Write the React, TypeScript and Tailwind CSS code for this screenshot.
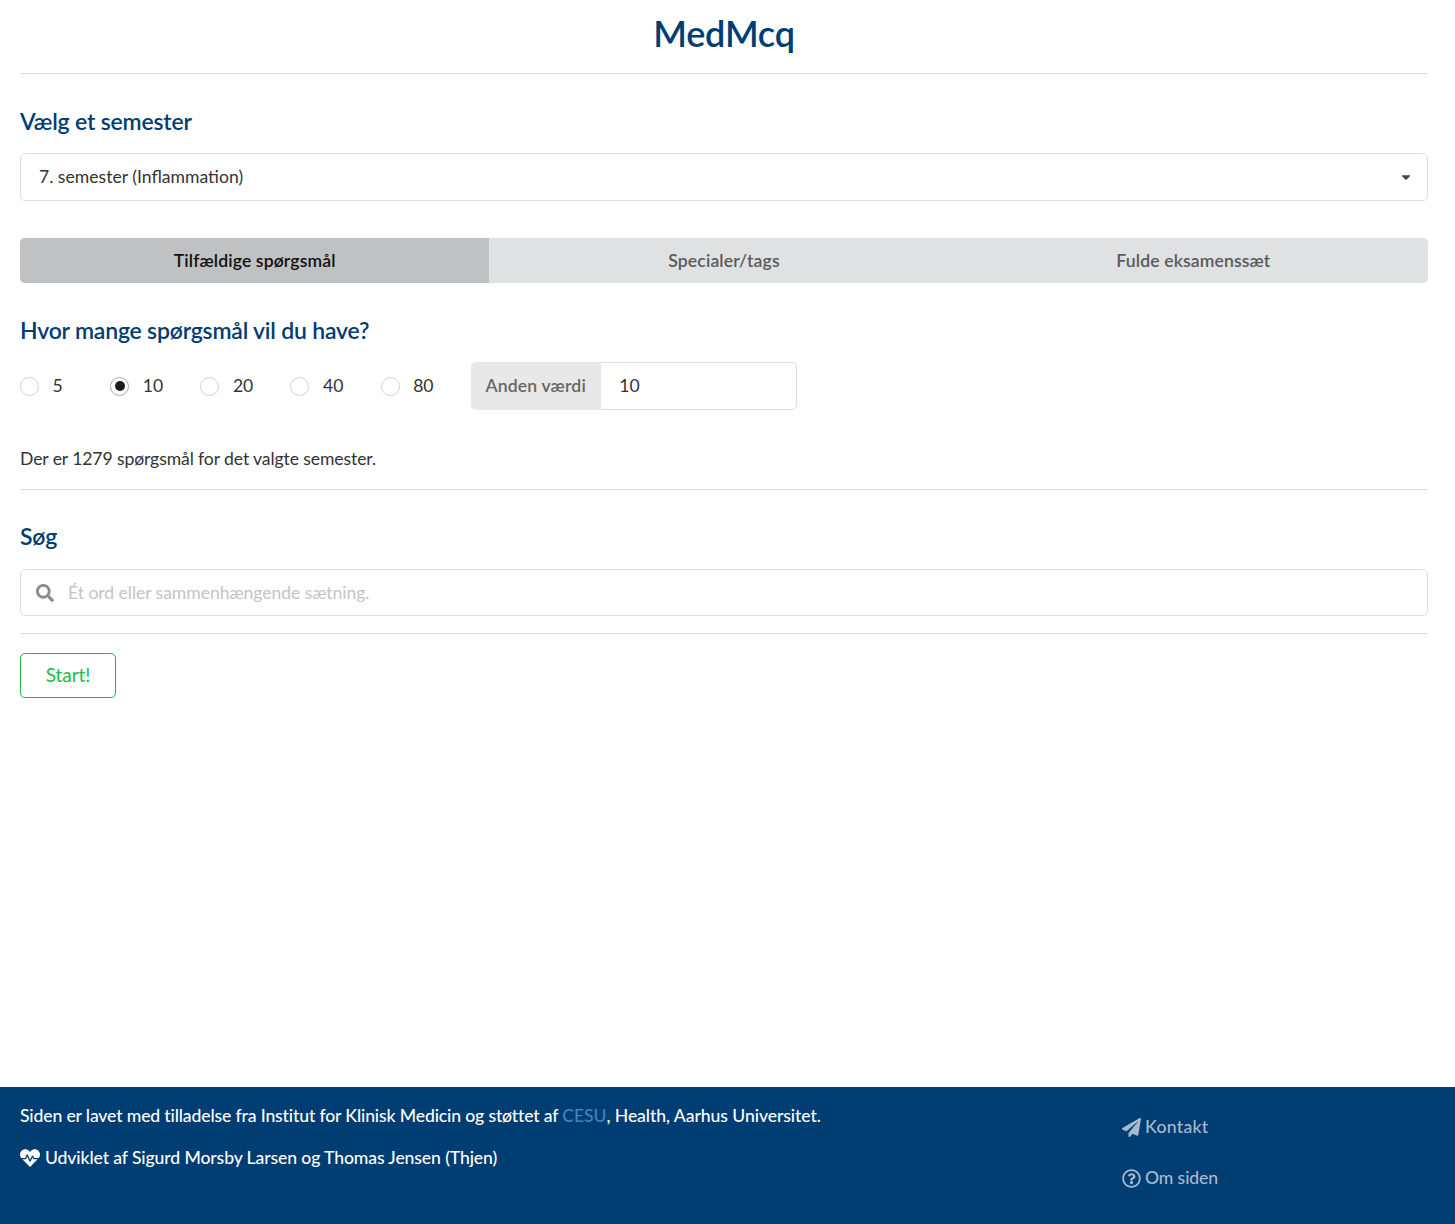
import React from "react";
import { FaCaretDown, FaHeartbeat, FaPaperPlane, FaRegQuestionCircle, FaSearch } from "react-icons/fa";

const counts = ["5", "10", "20", "40", "80"];

const Radio = ({ label, checked }: { label: string; checked?: boolean }) => (
  <label className="flex w-[90.15px] items-center">
    <span className={`flex h-[19px] w-[19px] items-center justify-center rounded-full border bg-white ${checked ? "border-[#aaaaaa]" : "border-[#d4d4d5]"}`}>
      {checked && <span className="h-[10px] w-[10px] rounded-full bg-[#1b1c1d]" />}
    </span>
    <span className="ml-[13.6px] tracking-normal text-[#333333]">{label}</span>
  </label>
);

const App = () => {
  return (
    <div className="flex min-h-[1224px] flex-col bg-white font-['Lato',sans-serif] text-[17.6px] leading-[24px] tracking-[-0.11px] text-[#212121]">
      <div className="ml-5 mr-[27px]">
        <div className="flex h-[74px] items-start justify-center border-b border-[#dedede] pt-[12px]">
          <h1 className="text-[36px] font-semibold leading-[42px] tracking-[-0.2px] text-[#003d73]">MedMcq</h1>
        </div>

        <h2 className="mt-[32px] text-[23px] font-semibold leading-[30px] tracking-[-0.2px] text-[#003d73]">Vælg et semester</h2>
        <div className="mt-[17px] flex h-[48px] items-center justify-between rounded-[5px] border border-[#dedede] pl-[18px] pr-[14px]">
          <span className="tracking-normal text-[#333333]">7. semester (Inflammation)</span>
          <FaCaretDown className="text-[14px] text-[#444444]" />
        </div>

        <div className="mt-[37px] grid h-[45px] grid-cols-3 overflow-hidden rounded-[5px] bg-[#e0e1e2] font-semibold tracking-[0.12px] text-[#5a5a5a]">
          <div className="flex items-center justify-center bg-[#c0c1c2] text-[#111111]">Tilfældige spørgsmål</div>
          <div className="flex items-center justify-center">Specialer/tags</div>
          <div className="flex items-center justify-center">Fulde eksamenssæt</div>
        </div>

        <h2 className="mt-[32px] text-[23px] font-semibold leading-[30px] tracking-[-0.2px] text-[#003d73]">Hvor mange spørgsmål vil du have?</h2>

        <div className="mt-[17px] flex h-[48px] items-center">
          {counts.map((c) => (
            <Radio key={c} label={c} checked={c === "10"} />
          ))}
          <div className="flex h-[48px] w-[326px]">
            <div className="flex w-[130px] items-center justify-center rounded-l-[5px] bg-[#e8e8e8] font-semibold tracking-[0.16px] text-[#666666]">Anden værdi</div>
            <div className="flex flex-1 items-center rounded-r-[5px] border border-l-0 border-[#dedede] pl-[18.5px] tracking-normal text-[#333333]">10</div>
          </div>
        </div>

        <p className="mt-[37px] text-[#333333]">Der er 1279 spørgsmål for det valgte semester.</p>
        <div className="mt-[18px] border-b border-[#dedede]" />

        <h2 className="mt-[31px] text-[23px] font-semibold leading-[30px] tracking-[-0.2px] text-[#003d73]">Søg</h2>
        <div className="mt-[18px] flex h-[47px] items-center rounded-[5px] border border-[#dedede] pl-[15px]">
          <FaSearch className="text-[18px] text-[#8a8a8a]" />
          <span className="ml-[14px] tracking-[-0.06px] text-[#c4c4c4]">Ét ord eller sammenhængende sætning.</span>
        </div>
        <div className="mt-[17px] border-b border-[#dedede]" />

        <button className="mt-[19px] flex h-[45px] w-[96px] items-center justify-center rounded-[5px] border border-[#21ba45] pb-[1px] text-[19px] text-[#21ba45]">Start!</button>
      </div>

      <footer className="mt-auto flex h-[137px] bg-[#003d73] font-medium text-white">
        <div className="ml-5 w-[1102px] pt-[17px]">
          <p className="tracking-[-0.14px]">
            Siden er lavet med tilladelse fra Institut for Klinisk Medicin og støttet af <span className="tracking-[-0.09px] text-[#4183c4]">CESU</span>
            <span className="tracking-[-0.07px]">, Health, Aarhus Universitet.</span>
          </p>
          <p className="mt-[18px] flex items-center">
            <FaHeartbeat className="mr-[5px] text-[20px]" />
            Udviklet af Sigurd Morsby Larsen og Thomas Jensen (Thjen)
          </p>
        </div>
        <div className="flex flex-col gap-[27px] pt-[28px] text-[#a6bacd]">
          <a className="flex items-center tracking-[0.3px]">
            <FaPaperPlane className="mr-[4px] text-[19px]" />
            Kontakt
          </a>
          <a className="flex items-center">
            <FaRegQuestionCircle className="mr-[4px] text-[19px]" />
            Om siden
          </a>
        </div>
      </footer>
    </div>
  );
};

export default App;
